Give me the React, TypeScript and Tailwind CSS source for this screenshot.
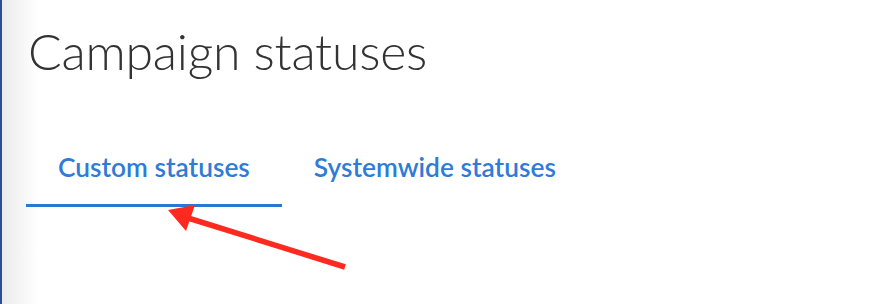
export default function App() {
  const tabs = ['Custom statuses', 'Systemwide statuses'];
  const active = 0;

  return (
    <div className="relative w-[894px] h-[304px] overflow-hidden border-l-2 border-[#2c4f8f] bg-[linear-gradient(to_right,#ebebeb,#ffffff_36px)] font-['Lato',sans-serif]">
      {/* Page heading */}
      <h1 className="pl-[26px] pt-[23px] text-[50px] leading-[56px] font-light text-[#333333] tracking-[-0.25px]">
        Campaign statuses
      </h1>

      {/* Tabs */}
      <div className="mt-[73px] ml-[24px] flex">
        {tabs.map((tab, i) => (
          <button
            key={tab}
            className={
              i === active
                ? 'px-[32px] pb-[22px] text-[26.3px] leading-[30px] font-semibold text-[#2f7bd6] border-b-[3px] border-[#2d77d4]'
                : 'px-[32px] pb-[22px] text-[26.3px] leading-[30px] font-semibold text-[#2f7bd6] border-b-[3px] border-transparent'
            }
          >
            {tab}
          </button>
        ))}
      </div>

      {/* Annotation arrow */}
      <svg className="absolute left-0 top-0" width="894" height="304" viewBox="0 0 894 304">
        <line x1="343" y1="267" x2="186" y2="218" stroke="#ff2a1f" strokeWidth="5.5" strokeLinecap="butt" />
        <polygon points="166,210 193,205 184,231" fill="#ff2a1f" />
      </svg>
    </div>
  );
}
